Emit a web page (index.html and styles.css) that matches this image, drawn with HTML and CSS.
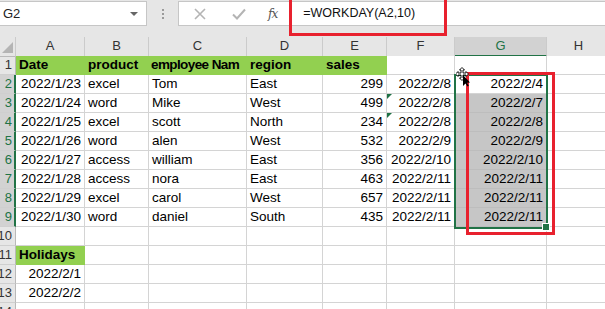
FILE: index.html
```html
<!DOCTYPE html>
<html>
<head>
<meta charset="utf-8">
<link rel="stylesheet" href="styles.css">
</head>
<body>
<div class="top">
  <div class="namebox"><span class="nb-text">G2</span><span class="dd"></span></div>
  <div class="grip"><i></i><i></i><i></i></div>
  <div class="fbar">
    <svg class="ic-x" width="12" height="12" viewBox="0 0 12 12"><path d="M1 1L11 11M11 1L1 11" stroke="#b4b4b4" stroke-width="1.6" fill="none"/></svg>
    <svg class="ic-ok" width="14" height="12" viewBox="0 0 14 12"><path d="M1 6.5L5 10.5L13 1.5" stroke="#b4b4b4" stroke-width="2" fill="none"/></svg>
    <span class="fx">fx</span>
    <span class="formula">=WORKDAY(A2,10)</span>
  </div>
</div>
<div class="sheet">
  <div class="hd corner"><span class="tri"></span></div>
  <div class="hd col">A</div><div class="hd col">B</div><div class="hd col">C</div><div class="hd col">D</div><div class="hd col">E</div><div class="hd col">F</div><div class="hd col sel">G</div><div class="hd col">H</div>

  <div class="hd row">1</div>
  <div class="c g b">Date</div><div class="c g b">product</div><div class="c g b tight">employee Nam</div><div class="c g b">region</div><div class="c g b">sales</div><div class="c"></div><div class="c"></div><div class="c"></div>

  <div class="hd row rsel">2</div>
  <div class="c r">2022/1/23</div><div class="c">excel</div><div class="c">Tom</div><div class="c">East</div><div class="c r">299</div><div class="c r">2022/2/8</div><div class="c r act">2022/2/4</div><div class="c"></div>

  <div class="hd row rsel">3</div>
  <div class="c r">2022/1/24</div><div class="c">word</div><div class="c">Mike</div><div class="c">West</div><div class="c r">499</div><div class="c r err">2022/2/8</div><div class="c r gs">2022/2/7</div><div class="c"></div>

  <div class="hd row rsel">4</div>
  <div class="c r">2022/1/25</div><div class="c">excel</div><div class="c">scott</div><div class="c">North</div><div class="c r">234</div><div class="c r err">2022/2/8</div><div class="c r gs">2022/2/8</div><div class="c"></div>

  <div class="hd row rsel">5</div>
  <div class="c r">2022/1/26</div><div class="c">word</div><div class="c">alen</div><div class="c">West</div><div class="c r">532</div><div class="c r">2022/2/9</div><div class="c r gs">2022/2/9</div><div class="c"></div>

  <div class="hd row rsel">6</div>
  <div class="c r">2022/1/27</div><div class="c">access</div><div class="c">william</div><div class="c">East</div><div class="c r">356</div><div class="c r">2022/2/10</div><div class="c r gs">2022/2/10</div><div class="c"></div>

  <div class="hd row rsel">7</div>
  <div class="c r">2022/1/28</div><div class="c">access</div><div class="c">nora</div><div class="c">East</div><div class="c r">463</div><div class="c r">2022/2/11</div><div class="c r gs">2022/2/11</div><div class="c"></div>

  <div class="hd row rsel">8</div>
  <div class="c r">2022/1/29</div><div class="c">excel</div><div class="c">carol</div><div class="c">West</div><div class="c r">657</div><div class="c r">2022/2/11</div><div class="c r gs">2022/2/11</div><div class="c"></div>

  <div class="hd row rsel">9</div>
  <div class="c r">2022/1/30</div><div class="c">word</div><div class="c">daniel</div><div class="c">South</div><div class="c r">435</div><div class="c r">2022/2/11</div><div class="c r gs">2022/2/11</div><div class="c"></div>

  <div class="hd row">10</div>
  <div class="c"></div><div class="c"></div><div class="c"></div><div class="c"></div><div class="c"></div><div class="c"></div><div class="c"></div><div class="c"></div>

  <div class="hd row">11</div>
  <div class="c g b">Holidays</div><div class="c"></div><div class="c"></div><div class="c"></div><div class="c"></div><div class="c"></div><div class="c"></div><div class="c"></div>

  <div class="hd row">12</div>
  <div class="c r">2022/2/1</div><div class="c"></div><div class="c"></div><div class="c"></div><div class="c"></div><div class="c"></div><div class="c"></div><div class="c"></div>

  <div class="hd row">13</div>
  <div class="c r">2022/2/2</div><div class="c"></div><div class="c"></div><div class="c"></div><div class="c"></div><div class="c"></div><div class="c"></div><div class="c"></div>

  <div class="hd row">14</div>
  <div class="c"></div><div class="c"></div><div class="c"></div><div class="c"></div><div class="c"></div><div class="c"></div><div class="c"></div><div class="c"></div>
</div>

<div class="selbox"><span class="handle"></span></div>
<div class="redbox cellred"></div>
<div class="redbox fred"></div>
<svg class="cursor" width="14" height="20" viewBox="0 0 14 20">
  <path d="M6 0.5L8.5 3H7V6H10V4.5L12.5 7L10 9.5V8H7V11H8.5L6 13.5L3.5 11H5V8H2V9.5L-0.5 7L2 4.5V6H5V3H3.5Z" fill="#fff" stroke="#000" stroke-width="0.9"/>
  <path d="M7 8L7 19L9.5 16.5L11.5 19.5L12.8 18.7L11 15.8L14 15.5Z" fill="#000"/>
</svg>
</body>
</html>
```
FILE: styles.css
```css
html, body {
  margin: 0;
  padding: 0;
}
body {
  position: relative;
  width: 605px;
  height: 309px;
  overflow: hidden;
  background: #e6e6e6;
  font-family: "Liberation Sans", Arial, sans-serif;
  color: #000;
}
.top {
  display: flex;
  align-items: stretch;
  height: 25px;
  padding-top: 1px;
  margin-bottom: 11px;
}
.namebox {
  width: 147px;
  box-sizing: border-box;
  background: #fff;
  border: 1px solid #c6c6c6;
  border-left: none;
  display: flex;
  align-items: center;
  justify-content: space-between;
  padding: 0 8px 0 3px;
  font-size: 13px;
  color: #222;
}
.dd {
  width: 0;
  height: 0;
  border-left: 4px solid transparent;
  border-right: 4px solid transparent;
  border-top: 4px solid #666;
}
.grip {
  width: 31px;
  display: flex;
  flex-direction: column;
  align-items: center;
  justify-content: center;
  gap: 2px;
}
.grip i {
  display: block;
  width: 2px;
  height: 2px;
  background: #9a9a9a;
}
.fbar {
  flex: 1;
  background: #fff;
  border: 1px solid #c6c6c6;
  border-right: none;
  display: flex;
  align-items: center;
  padding-left: 15px;
}
.ic-x { margin-right: 26px; }
.ic-ok { margin-right: 22px; }
.fx {
  font-family: "DejaVu Serif", "Liberation Serif", serif;
  font-style: italic;
  font-size: 12px;
  color: #555;
  letter-spacing: -1px;
  margin-right: 26px;
}
.formula {
  font-size: 12.5px;
  color: #111;
  position: relative;
  top: -1px;
}
.sheet {
  display: grid;
  grid-template-columns: 16px 69px 64px 98px 76px 64px 68px 92px 64px;
  grid-auto-rows: 19px;
  width: 611px;
}
.hd {
  background: #e6e6e6;
  box-sizing: border-box;
  font-size: 13px;
  color: #333;
  line-height: 18px;
  white-space: nowrap;
  overflow: hidden;
}
.col {
  text-align: center;
  border-right: 1px solid #cbcbcb;
  border-bottom: 1px solid #b9b9b9;
  height: 20px;
}
.corner {
  border-right: 1px solid #cbcbcb;
  border-bottom: 1px solid #b9b9b9;
  height: 20px;
  position: relative;
}
.tri {
  position: absolute;
  right: 2px;
  bottom: 3px;
  width: 0;
  height: 0;
  border-left: 11px solid transparent;
  border-bottom: 11px solid #b4b4b4;
}
.col.sel {
  background: #d2d2d2;
  color: #217346;
  border-bottom: 2px solid #217346;
}
.row {
  text-align: right;
  padding-right: 3px;
  border-right: 1px solid #b9b9b9;
  border-bottom: 1px solid #cfcfcf;
  direction: rtl;
}
.row.rsel {
  background: #d2d2d2;
  color: #217346;
  border-right: 2px solid #217346;
  padding-right: 2px;
}
.c {
  background: #fff;
  box-sizing: border-box;
  border-right: 1px solid #d4d4d4;
  border-bottom: 1px solid #d4d4d4;
  font-size: 13.5px;
  line-height: 18px;
  padding: 0 3px;
  white-space: nowrap;
  overflow: hidden;
  position: relative;
}
.c.r { text-align: right; }
.c.b { font-weight: bold; }
.c.tight {
  letter-spacing: -0.6px;
  padding: 0 0 0 2px;
}
.c.g {
  background: #92d050;
  border-color: #92d050;
}
.c.gs {
  background: #c6c6c6;
  border-bottom-color: #bdbdbd;
}
.c.err::before {
  content: "";
  position: absolute;
  left: 0;
  top: 0;
  width: 0;
  height: 0;
  border-top: 5px solid #1e7145;
  border-right: 5px solid transparent;
}
.selbox {
  position: absolute;
  left: 454px;
  top: 74px;
  width: 94px;
  height: 155px;
  box-sizing: border-box;
  border: 2px solid #217346;
}
.handle {
  position: absolute;
  right: -4px;
  bottom: -4px;
  width: 6px;
  height: 6px;
  background: #217346;
  border: 1px solid #fff;
}
.redbox {
  position: absolute;
  box-sizing: border-box;
  border: 3px solid #e8212e;
}
.cellred {
  left: 466px;
  top: 72px;
  width: 89px;
  height: 163px;
}
.fred {
  left: 289px;
  top: -3px;
  width: 158px;
  height: 39px;
}
.cursor {
  position: absolute;
  left: 456px;
  top: 67px;
}
```
